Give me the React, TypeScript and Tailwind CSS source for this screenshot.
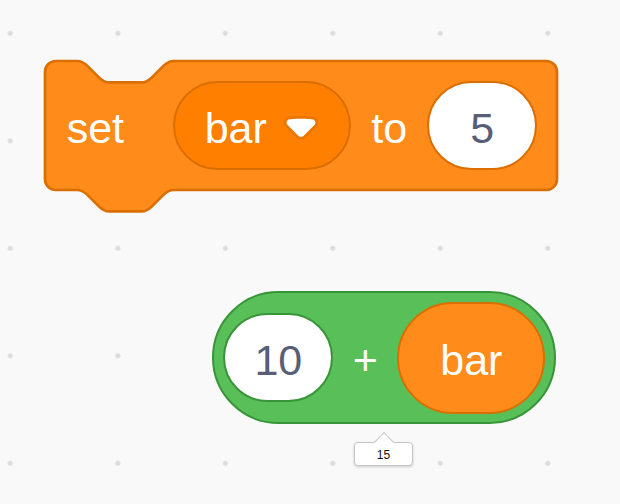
import React from 'react';

const S = 2.68;
const W = 512 / S;
const H = 129 / S;

// scratch "stack" block outline, in block units (scaled by S)
const stackPath = [
  'M 0,4 A 4,4 0 0,1 4,0 H 12',
  'c 2,0 3,1 4,2 l 4,4 c 1,1 2,2 4,2 h 12 c 2,0 3,-1 4,-2 l 4,-4 c 1,-1 2,-2 4,-2',
  `H ${W - 4} a 4,4 0 0,1 4,4 V ${H - 4} a 4,4 0 0,1 -4,4 H 48`,
  'c -2,0 -3,1 -4,2 l -4,4 c -1,1 -2,2 -4,2 h -12 c -2,0 -3,-1 -4,-2 l -4,-4 c -1,-1 -2,-2 -4,-2',
  'H 4 a 4,4 0 0,1 -4,-4 z',
].join(' ');

const font = { fontFamily: '"Liberation Sans", Arial, Helvetica, sans-serif' };

const DropdownArrow = () => (
  <svg width="34" height="23.6" viewBox="0 0 12.71 8.79" className="mt-[4px]">
    <g opacity="0.1">
      <path
        d="M12.71,2.44A2.41,2.41,0,0,1,12,4.16L8.08,8.08a2.45,2.45,0,0,1-3.45,0L0.72,4.16A2.42,2.42,0,0,1,0,2.44,2.48,2.48,0,0,1,.71.71C1,0.47,1.43,0,6.36,0S11.75,0.46,12,.71A2.44,2.44,0,0,1,12.71,2.44Z"
        fill="#231f20"
      />
    </g>
    <path
      d="M6.36,7.79a1.43,1.43,0,0,1-1-.42L1.420,3.45a1.440,1.440,0,0,1,0-2c0.56-.56,9.31-0.56,9.87,0a1.44,1.44,0,0,1,0,2L7.370,7.370A1.43,1.43,0,0,1,6.36,7.79Z"
      fill="#fff"
    />
  </svg>
);

const SetBlock = () => (
  <div className="absolute left-[45px] top-[61px] w-[512px] h-[129px]">
    <svg width="512" height="129" className="absolute left-0 top-0 overflow-visible">
      <g transform={`scale(${S})`}>
        <path d={stackPath} fill="#ff8c1a" stroke="#db6e00" strokeWidth="1" />
      </g>
    </svg>
    <div className="relative flex h-[129px] items-center pl-[21.7px] text-[43px] leading-none text-white">
      <span className="pt-[5px]">set</span>
      <div className="ml-[48.6px] flex h-[88.6px] w-[178.6px] items-center rounded-full border-[2.7px] border-[#db6e00] bg-[#ff8000] pl-[30px]">
        <span className="pt-[5px]">bar</span>
        <div className="ml-[17px]">
          <DropdownArrow />
        </div>
      </div>
      <span className="ml-[20px] pt-[5px]">to</span>
      <div className="ml-[19.7px] flex h-[88.6px] w-[110.6px] items-center justify-center rounded-full border-[2.7px] border-[#db6e00] bg-white pt-[5px] text-[#575e75]">
        5
      </div>
    </div>
  </div>
);

const AddBlock = () => (
  <div className="absolute left-[212px] top-[291px] flex h-[133px] w-[344px] items-center rounded-full border-[2.7px] border-[#389438] bg-[#59c059] pl-[9.3px] text-[43px] leading-none">
    <div className="flex h-[89px] w-[110px] items-center justify-center rounded-full border-[2.7px] border-[#389438] bg-white pt-[5px] text-[#575e75]">
      10
    </div>
    <span className="w-[64px] pt-[5px] text-center text-white">+</span>
    <div className="flex h-[112px] w-[148px] items-center justify-center rounded-full border-[2.7px] border-[#db6e00] bg-[#ff8c1a] pt-[5px] text-white">
      bar
    </div>
  </div>
);

const Tooltip = () => (
  <div className="absolute left-[354px] top-[442px] flex h-[24px] w-[59px] items-center justify-center rounded-[4px] border border-[#c6c6c6] bg-white text-[12px] leading-none text-[#111] shadow-[0_1px_3px_rgba(0,0,0,0.18)]">
    <div className="absolute left-[22px] top-[-8px] h-[14px] w-[14px] rotate-45 border-l border-t border-[#c6c6c6] bg-white" />
    <span className="relative pt-[1px]">15</span>
  </div>
);

export default function App() {
  return (
    <div
      style={font}
      className="relative h-[504px] w-[620px] overflow-hidden bg-[#f9f9f9] bg-[radial-gradient(circle_at_center,#dcdcdc_2.2px,transparent_2.9px)] bg-[length:107.5px_107.5px] bg-[position:-43.45px_-20.45px]"
    >
      <SetBlock />
      <AddBlock />
      <Tooltip />
    </div>
  );
}
